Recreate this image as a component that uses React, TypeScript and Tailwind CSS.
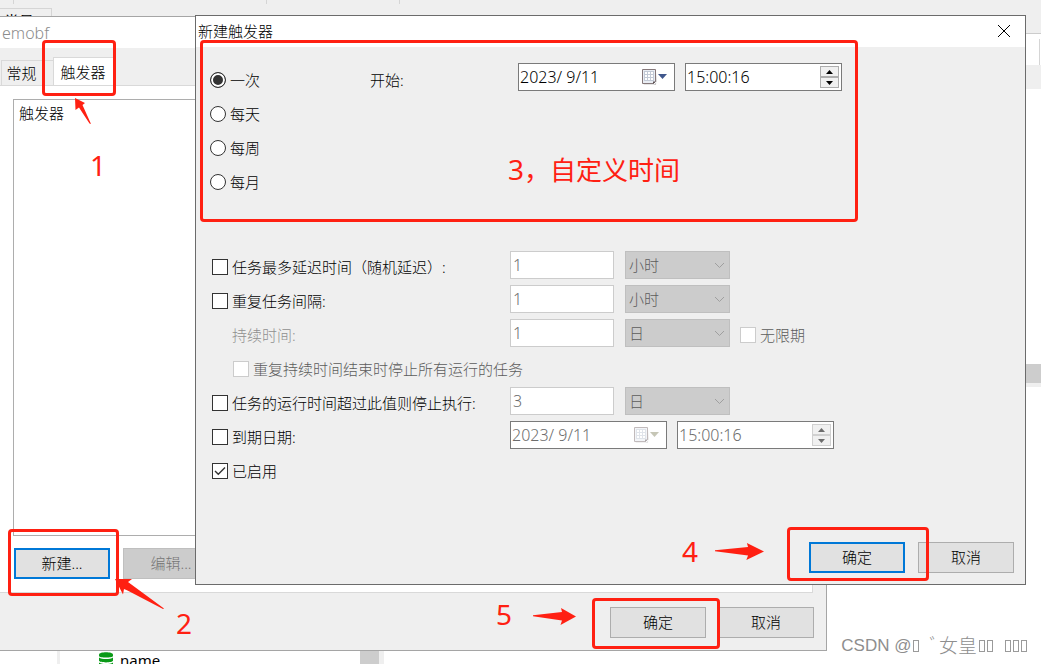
import React, { useState } from 'react';

const frequencies = ['一次', '每天', '每周', '每月'];

const Mark: React.FC<{ className: string }> = ({ className }) => (
  <div className={`pointer-events-none absolute z-10 rounded border-3 border-[#ff2012] ${className}`} />
);

const Note: React.FC<{ className: string; children: React.ReactNode }> = ({ className, children }) => (
  <span className={`pointer-events-none absolute z-10 text-[28px] leading-8 font-normal whitespace-nowrap text-[#ff2012] ${className}`}>
    {children}
  </span>
);

const RightArrow: React.FC<{ className: string }> = ({ className }) => (
  <svg className={`absolute z-10 h-[17px] ${className}`} viewBox="0 0 43 17" preserveAspectRatio="none" fill="#ff2012">
    <path d="M0 7.2 L29 4 L28 0 L43 8.6 L27.5 17 L29 12.5 L0 8.2Z" />
  </svg>
);

const Button: React.FC<{ label: string; variant?: 'normal' | 'focus' | 'disabled' }> = ({ label, variant = 'normal' }) => {
  const look = {
    normal: 'border border-[#adadad] bg-[#e1e1e1] text-black',
    focus: 'border-2 border-[#0078d7] bg-[#e1e1e1] text-black',
    disabled: 'border border-[#bfbfbf] bg-[#cccccc] text-[#767676]',
  };
  return (
    <button type="button" disabled={variant === 'disabled'} className={`h-[31px] w-24 shrink-0 pb-0.5 ${look[variant]}`}>
      {label}
    </button>
  );
};

const CalendarIcon: React.FC<{ disabled?: boolean }> = ({ disabled }) => (
  <svg className="h-[17px] w-[25px]" viewBox="0 0 25 17" opacity={disabled ? 0.5 : 1}>
    <path d="M1.5 15.5 H12 L15 12.5 V3 L14 16 H2Z" fill="#ccc" />
    <path d="M.5 .5 H13.5 V12.5 L11.5 14.5 H.5Z" fill="#e9edf3" stroke="#85787a" />
    <rect x="2" y="2" width="10" height="10" fill="#c3cad6" />
    <path
      d="M3 3h2v2H3z M6 3h2v2H6z M9 3h2v2H9z M3 6h2v2H3z M6 6h2v2H6z M9 6h2v2H9z M3 9h2v2H3z M6 9h2v2H6z M9 9h2v2H9z"
      fill="#fff"
    />
    <path d="M11 15 V12.5 H14Z" fill="#5d5356" />
    <path d="M16 5 H25 L20.5 10Z" fill={disabled ? '#8f8f70' : '#40578c'} />
  </svg>
);

interface FieldProps {
  label: string;
  value: string;
  disabled?: boolean;
}

const DateField: React.FC<FieldProps> = ({ label, value, disabled }) => (
  <div className="flex h-7 w-[157px] items-center border border-[#7a7a7a] bg-white pr-[7px] pl-px">
    <input
      type="text"
      aria-label={label}
      defaultValue={value}
      disabled={disabled}
      className="min-w-0 flex-1 text-base text-black disabled:text-[#6d6d6d]"
    />
    <button type="button" aria-label="选择日期" disabled={disabled}>
      <CalendarIcon disabled={disabled} />
    </button>
  </div>
);

const TimeField: React.FC<FieldProps> = ({ label, value, disabled }) => {
  const color = disabled ? '#6d6d6d' : '#000';
  const spin = disabled ? 'border-[#d0d0d0]' : 'border-[#adadad]';
  return (
    <div className="flex h-7 w-[157px] items-center border border-[#7a7a7a] bg-white pr-0.5 pl-px">
      <input
        type="text"
        aria-label={label}
        defaultValue={value}
        disabled={disabled}
        className="min-w-0 flex-1 text-base text-black disabled:text-[#6d6d6d]"
      />
      <div className="flex w-[19px] flex-col">
        <button type="button" aria-label="增加" disabled={disabled} className={`flex h-[11px] items-center justify-center border bg-[#f0f0f0] ${spin}`}>
          <svg className="h-1 w-[7px]" viewBox="0 0 7 4" fill={color}><path d="M0 4 L3.5 0 L7 4Z" /></svg>
        </button>
        <button type="button" aria-label="减少" disabled={disabled} className={`flex h-[11px] items-center justify-center border bg-[#f0f0f0] ${spin}`}>
          <svg className="h-1 w-[7px]" viewBox="0 0 7 4" fill={color}><path d="M0 0 L3.5 4 L7 0Z" /></svg>
        </button>
      </div>
    </div>
  );
};

const AmountField: React.FC<{ label: string; value: string; unit: string }> = ({ label, value, unit }) => (
  <>
    <input
      type="text"
      aria-label={label}
      defaultValue={value}
      disabled
      className="h-7 w-[104px] border border-[#cccccc] bg-white px-0.5 text-base text-[#6d6d6d]"
    />
    <div className="relative ml-[11px]">
      <select
        aria-label={`${label}单位`}
        disabled
        className="block h-7 w-[105px] appearance-none border border-[#bfbfbf] bg-[#cccccc] px-[3px] text-[#5c5c5c] opacity-100"
      >
        <option>{unit}</option>
      </select>
      <svg className="pointer-events-none absolute top-[11px] right-[5px] h-[7px] w-[11px]" viewBox="0 0 11 7" fill="none" stroke="#9f9f9f">
        <path d="M1 1 L5.5 5.5 L10 1" />
      </svg>
    </div>
  </>
);

interface CheckProps {
  label: string;
  disabled?: boolean;
  checked?: boolean;
}

const Check: React.FC<CheckProps> = ({ label, disabled, checked }) => {
  const [on, setOn] = useState(!!checked);
  return (
    <label className={`flex items-center gap-1 whitespace-nowrap ${disabled ? 'text-[#5c5c5c]' : 'text-black'}`}>
      <span className="relative flex">
        <input
          type="checkbox"
          checked={on}
          disabled={disabled}
          onChange={(e) => setOn(e.target.checked)}
          className="size-4 appearance-none border border-[#333333] bg-white disabled:border-[#cccccc]"
        />
        {on && (
          <svg className="pointer-events-none absolute inset-0 size-4" viewBox="0 0 16 16" fill="none" stroke="#333" strokeWidth="1.4">
            <path d="M3 8 L6.3 11.3 L13 4.6" />
          </svg>
        )}
      </span>
      {label}
    </label>
  );
};

// One line of the advanced settings: label on the left, controls on the right
const OptionRow: React.FC<{ label: React.ReactNode; children?: React.ReactNode }> = ({ label, children }) => (
  <div className="flex h-[34px] items-center">
    <div className="w-[298px] shrink-0">{label}</div>
    <div className="flex items-center pb-1">{children}</div>
  </div>
);

const Background: React.FC = () => (
  <div className="flex min-h-screen flex-col">
    <div className="flex h-[33px] flex-col bg-[#efefef]">
      <div className="flex h-1">
        <div className="w-3.5 border-r border-[#d5d5d5]" />
        <div className="w-[253px] border-r border-[#d5d5d5]" />
        <div className="w-[133px] border-r border-[#d5d5d5]" />
      </div>
      <div className="mt-1 h-6 w-[52px] overflow-hidden border border-l-0 border-[#d5d5d5] pl-1 leading-6 font-normal">常量 小</div>
    </div>
    <div className="flex h-8 justify-end border-t border-[#cccccc] pt-[5px]">
      <div className="w-0.5 border-l border-[#d5d5d5]" />
    </div>
    <div className="h-6 bg-[#efefef]" />
    <div className="flex flex-1 flex-col items-end pt-[275px]">
      <div className="h-[23px] w-10 border-b-4 border-[#efefef] bg-[#cdcdcd]" />
    </div>
    <div className="flex h-3.5">
      <div className="w-[60px] border-r-3 border-[#efefef]" />
      <div className="flex w-[300px] items-start gap-[7px] pt-0.5 pl-[39px]">
        <svg className="h-4 w-3.5 shrink-0" viewBox="0 0 14 16" fill="#0a9a17">
          <path d="M0 2.5 C0 -.5 14 -.5 14 2.5 V4 C14 6 0 6 0 4Z" />
          <path d="M0 5.5 C3 7.5 11 7.5 14 5.5 V8.5 C14 11 0 11 0 8.5Z" />
          <path d="M0 10.5 C3 12.5 11 12.5 14 10.5 V13.5 C14 16 0 16 0 13.5Z" />
        </svg>
        <span className="leading-4 font-normal">name</span>
      </div>
      <div className="w-6 border-r-5 border-[#efefef] bg-[#cdcdcd]" />
    </div>
  </div>
);

const TaskWindow: React.FC = () => (
  <section className="absolute top-4 right-[214px] left-0 border border-l-0 border-[#a5a5a5] bg-[#efefef]">
    <h1 className="flex h-[31px] items-center bg-white pl-0.5 text-base text-[#8c8c8c]">emobf</h1>
    <div className="flex items-end pt-[9px] pl-px" role="tablist">
      <button type="button" role="tab" className="h-[25px] w-[52px] border border-r-0 border-b-0 border-[#d9d9d9] pr-3">
        常规
      </button>
      <div className="relative">
        <button type="button" role="tab" aria-selected="true" className="block h-7 w-[62px] border border-b-0 border-[#d9d9d9] bg-white pr-0.5 whitespace-nowrap">
          触发器
        </button>
        <Mark className="-top-[17px] -left-[11px] h-14 w-[74px]" />
        <svg className="absolute top-[41px] left-[22px] z-10 h-[27px] w-4" viewBox="0 0 16 27" fill="#ff2012">
          <path d="M0 0 L10 5 L7.5 7 L16 26 L14.5 25.5 L4 9.5 L.5 12Z" />
        </svg>
        <Note className="top-[92px] left-[37px]">1</Note>
      </div>
    </div>
    <div className="mr-[13px] border border-l-0 border-[#d9d9d9] bg-white px-[13px] pt-[13px] pb-[13px]">
      <div className="h-[437px] border border-[#adadad] px-[5px] py-[3px]">触发器</div>
      <div className="mt-3 flex gap-[13px] pl-px">
        <div className="relative">
          <Button label="新建..." variant="focus" />
          <Mark className="-top-[19px] -left-[6px] h-[67px] w-[111px]" />
          <svg className="absolute top-[31px] left-[101px] z-10 h-[31px] w-[49px]" viewBox="0 0 49 31" fill="#ff2012">
            <path d="M0 0 H17 L13 3 L49 29.5 L48 30 L12.5 11.5 L9 10 L8 15.5Z" />
          </svg>
          <Note className="top-[59px] left-[162px]">2</Note>
        </div>
        <Button label="编辑..." variant="disabled" />
      </div>
    </div>
    <div className="flex justify-end gap-3 pt-3.5 pr-3 pb-3">
      <div className="relative">
        <Note className="-top-[9px] -left-[114px]">5</Note>
        <RightArrow className="top-px -left-[77px] w-[43px]" />
        <Button label="确定" />
        <Mark className="-top-[9px] -left-[18px] h-[51px] w-32" />
      </div>
      <Button label="取消" />
    </div>
  </section>
);

const TriggerDialog: React.FC = () => {
  const [frequency, setFrequency] = useState('一次');

  return (
    <section role="dialog" aria-label="新建触发器" className="absolute top-[15px] right-[15px] left-[195px] border border-[#6b6b6b] bg-[#efefef]">
      <div className="flex h-[31px] items-center justify-between bg-white pr-[15px] pb-0.5 pl-0.5">
        <h2 className="font-light">新建触发器</h2>
        <button type="button" aria-label="关闭">
          <svg className="size-3" viewBox="0 0 12 12" stroke="#000" fill="none"><path d="M0 0 L12 12 M12 0 L0 12" /></svg>
        </button>
      </div>

      <div className="relative flex px-3.5 pt-4">
        <fieldset className="w-40">
          {frequencies.map((name) => (
            <label key={name} className="flex h-[34px] items-center gap-1">
              <input
                type="radio"
                name="frequency"
                checked={frequency === name}
                onChange={() => setFrequency(name)}
                className="size-4 appearance-none rounded-full border border-[#333333] bg-white checked:border-[#333333] checked:bg-[#333333] checked:inset-ring-2 checked:inset-ring-white"
              />
              {name}
            </label>
          ))}
        </fieldset>
        <div className="flex h-[34px] w-[148px] items-center">开始:</div>
        <div className="flex items-start gap-2.5">
          <DateField label="开始日期" value="2023/ 9/11" />
          <TimeField label="开始时间" value="15:00:16" />
        </div>
        <Mark className="-top-[7px] left-1 h-[182px] w-[658px]" />
        <Note className="top-[106px] left-[312px]">
          3<span className="text-[26px]">，自定义时间</span>
        </Note>
      </div>

      <div className="mt-[51px] px-4">
        <OptionRow label={<Check label="任务最多延迟时间（随机延迟）:" />}>
          <AmountField label="延迟时间" value="1" unit="小时" />
        </OptionRow>
        <OptionRow label={<Check label="重复任务间隔:" />}>
          <AmountField label="任务间隔" value="1" unit="小时" />
        </OptionRow>
        <OptionRow label={<span className="pl-5 text-[#909090]">持续时间:</span>}>
          <AmountField label="持续时间" value="1" unit="日" />
          <div className="pt-1 pl-2.5">
            <Check label="无限期" disabled />
          </div>
        </OptionRow>
        <OptionRow label={<div className="pl-[21px]"><Check label="重复持续时间结束时停止所有运行的任务" disabled /></div>} />
        <OptionRow label={<Check label="任务的运行时间超过此值则停止执行:" />}>
          <AmountField label="运行时间" value="3" unit="日" />
        </OptionRow>
        <OptionRow label={<Check label="到期日期:" />}>
          <div className="flex gap-2.5">
            <DateField label="到期日期" value="2023/ 9/11" disabled />
            <TimeField label="到期时间" value="15:00:16" disabled />
          </div>
        </OptionRow>
        <OptionRow label={<Check label="已启用" checked />} />
      </div>

      <div className="mt-[54px] flex justify-end gap-[13px] pr-[11px] pb-[11px]">
        <div className="relative">
          <Note className="-top-[7px] -left-[127px]">4</Note>
          <RightArrow className="top-px -left-[94px] w-[49px]" />
          <Button label="确定" variant="focus" />
          <Mark className="-top-[15px] -left-[22px] h-[54px] w-[142px]" />
        </div>
        <Button label="取消" />
      </div>
    </section>
  );
};

const MissingGlyph: React.FC = () => <span className="h-3 w-1.5 border border-[#9a9a9a]" />;

const App: React.FC = () => {
  return (
    <main className="relative min-h-screen overflow-hidden bg-white font-['Noto_Sans','Noto_Sans_CJK_SC',sans-serif] text-[15px] leading-5 font-light text-black">
      <Background />
      <TaskWindow />
      <TriggerDialog />
      <div className="absolute right-3.5 bottom-1.5 flex items-center gap-0.5 text-[19px] leading-6 text-[#8e8e8e]">
        <span className="font-['Liberation_Sans',sans-serif] text-[17px]">CSDN @</span>
        <MissingGlyph />
        <span className="pl-2">ﾞ女皇</span>
        <MissingGlyph />
        <MissingGlyph />
        <span className="w-2" />
        <MissingGlyph />
        <MissingGlyph />
        <MissingGlyph />
      </div>
    </main>
  );
};

export default App;
